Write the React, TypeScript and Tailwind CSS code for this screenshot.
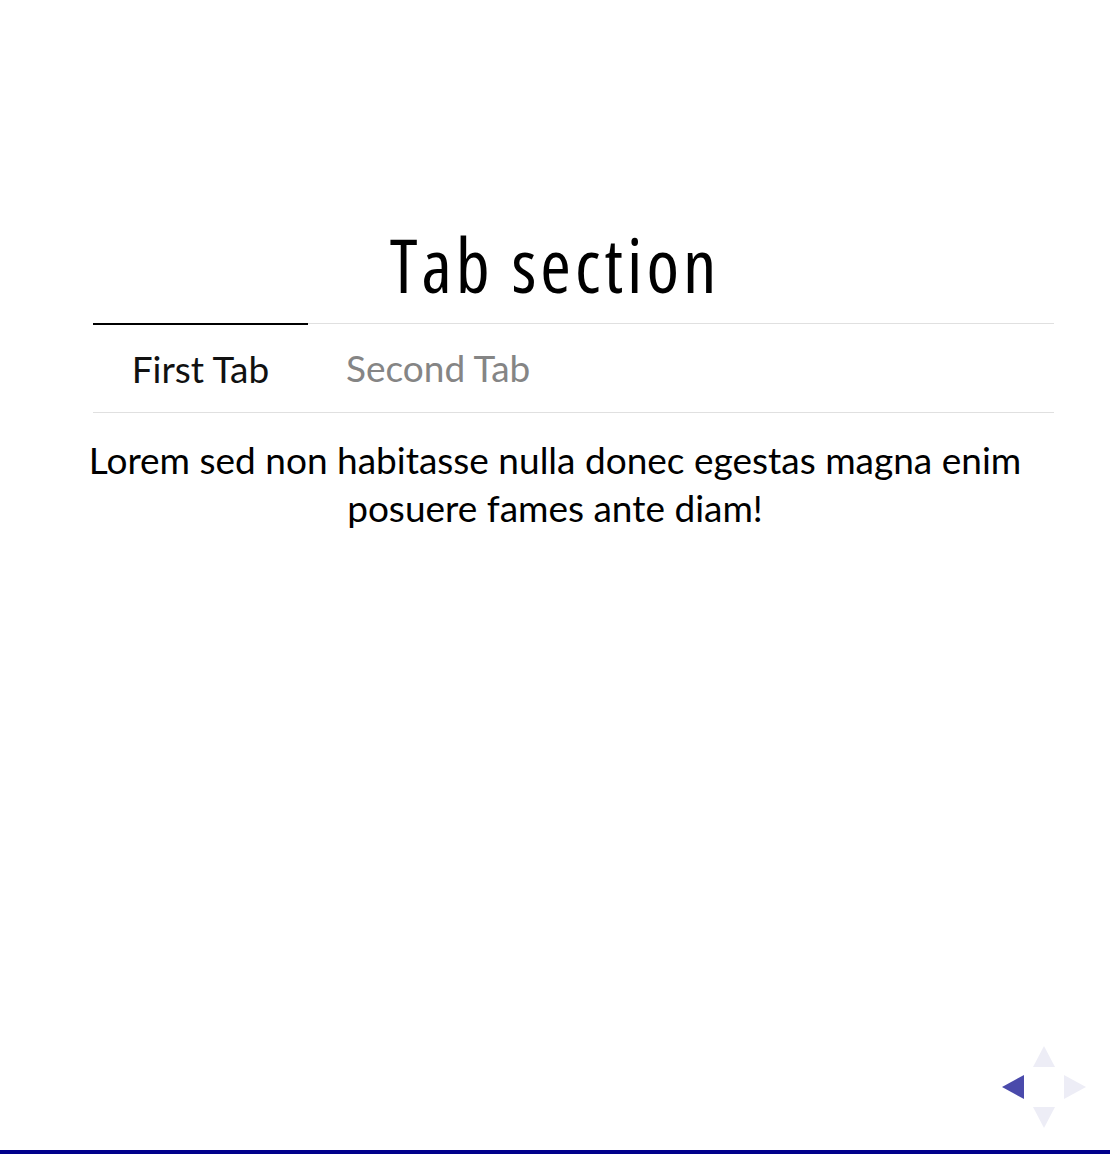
export default function App() {
  return (
    <div className="relative flex h-[1154px] w-full flex-col bg-white">
      <h1
        className="mt-[217px] text-center text-[74px] leading-[96px] font-normal tracking-[4px] text-black [font-stretch:75%]"
        style={{ fontFamily: '"Open Sans", sans-serif' }}
      >
        Tab section
      </h1>
      <div className="ml-[93px] mt-[10px] w-[961px] border-y border-[#e0e0e0]">
        <div className="flex" style={{ fontFamily: "Lato, sans-serif" }}>
          <button className="-mt-px w-[215px] border-t-2 border-black pt-[19px] pb-[19px] text-center text-[37px] leading-[48px] text-[#111]">
            First Tab
          </button>
          <button className="px-[38px] pt-[20px] pb-[20px] text-center text-[37px] leading-[48px] text-[#858585]">
            Second Tab
          </button>
        </div>
      </div>
      <p
        className="mt-[23px] text-center text-[37px] leading-[48px] text-black"
        style={{ fontFamily: "Lato, sans-serif" }}
      >
        Lorem sed non habitasse nulla donec egestas magna enim
        <br />
        posuere fames ante diam!
      </p>

      {/* controls */}
      <div className="absolute bottom-[24px] right-[22px] h-[84px] w-[86px]">
        <svg width="86" height="84" viewBox="0 0 86 84">
          <polygon points="42,0 53,21 31,21" fill="#ededf6" />
          <polygon points="0,41 22,29 22,53" fill="#4a4aab" />
          <polygon points="84,41 62,29 62,53" fill="#ededf6" />
          <polygon points="42,82 53,61 31,61" fill="#ededf6" />
        </svg>
      </div>
      <div className="absolute bottom-0 left-0 h-[4px] w-full bg-[#00008b]" />
    </div>
  );
}
